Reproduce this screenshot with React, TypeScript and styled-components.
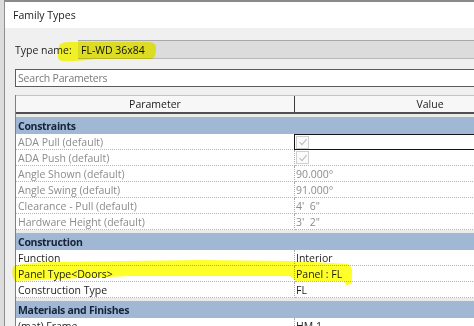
import React from "react";
import styled, { createGlobalStyle } from "styled-components";

const GlobalStyle = createGlobalStyle`
  html, body { margin: 0; padding: 0; }
  body {
    background: #dcdcdc;
    overflow: hidden;
    font-family: "Open Sans", "Noto Sans", "Liberation Sans", sans-serif;
    font-size: 10.5px;
    color: #1e1e1e;
  }
`;

const Screen = styled.div`
  position: relative;
  width: 474px;
  height: 326px;
  overflow: hidden;
  display: flex;
  align-items: flex-start;
  padding-left: 4px;
  box-sizing: border-box;
`;

const Dialog = styled.div`
  flex: none;
  width: 640px;
  background: #f0f0f0;
  border-left: 1px solid #8e8e8e;
  border-top: 2px solid #8a8a8a;
  display: flex;
  flex-direction: column;
  & > * { flex-shrink: 0; }
`;

const TitleBar = styled.div`
  height: 26px;
  background: #ffffff;
  display: flex;
  align-items: center;
  padding-left: 8px;
  font-size: 10.5px;
  color: #1a1a1a;
`;

const Content = styled.div`
  padding-left: 10px;
  display: flex;
  flex-direction: column;
  & > * { flex-shrink: 0; }
`;

const TypeRow = styled.div`
  margin-top: 12px;
  display: flex;
  align-items: stretch;
  height: 19px;
`;

const TypeLabel = styled.div`
  width: 63px;
  flex: none;
  display: flex;
  align-items: center;
`;

const TypeBox = styled.div`
  flex: 1;
  background: #dcdcdc;
  border-top: 1px solid #a8a8a8;
  border-bottom: 1px solid #b8b8b8;
  display: flex;
  align-items: center;
  padding-left: 3px;
  color: #111;
`;

const SearchBox = styled.div`
  margin-top: 10px;
  height: 16px;
  background: #ffffff;
  border: 1px solid #5c5c5c;
  border-right: none;
  display: flex;
  align-items: center;
  padding-left: 2px;
  color: #7a7a7a;
  letter-spacing: -0.2px;
`;

const Table = styled.div`
  margin-top: 8px;
  display: flex;
  flex-direction: column;
  border-left: 1px solid #808080;
  & > * { flex-shrink: 0; }
`;

const HeaderRow = styled.div`
  display: grid;
  grid-template-columns: 279px 1fr;
  height: 16px;
  background: #f7f7f7;
  border-top: 1px solid #c4c4c4;
  border-bottom: 2px solid #4f4f4f;
`;

const HeaderCell = styled.div<{ $divider?: boolean }>`
  display: flex;
  align-items: center;
  justify-content: center;
  color: #1a1a1a;
  border-right: ${(p) => (p.$divider ? "1px solid #3c3c3c" : "none")};
  padding-right: ${(p) => (p.$divider ? "0" : "80px")};
`;

const GroupRow = styled.div`
  height: 17px;
  border-top: 3px solid #ebebeb;
  background: #a0b8d4;
  display: flex;
  align-items: center;
  padding-left: 2px;
  font-weight: 700;
  letter-spacing: -0.3px;
  color: #16233b;
`;

const Row = styled.div`
  display: grid;
  grid-template-columns: 279px 1fr;
  height: 16px;
  background: #ffffff;
`;

const ParamCell = styled.div<{ $muted?: boolean }>`
  display: flex;
  align-items: center;
  padding-left: 2px;
  border-bottom: 1px dotted #b4b4b4;
  border-right: 1px dotted #a8a8a8;
  color: ${(p) => (p.$muted ? "#8c8c8c" : "#1e1e1e")};
  white-space: nowrap;
`;

const ValueCell = styled.div<{ $muted?: boolean; $selected?: boolean }>`
  display: flex;
  align-items: center;
  padding-left: 1px;
  box-sizing: border-box;
  border-bottom: 1px dotted #b4b4b4;
  ${(p) => (p.$selected ? "border: 1px solid #141414; margin-left: -1px; padding-left: 1px;" : "")}
  color: ${(p) => (p.$muted ? "#8c8c8c" : "#1e1e1e")};
  white-space: pre;
`;

const CheckBox = styled.span`
  width: 11px;
  height: 11px;
  border: 1px solid #cfcfcf;
  display: inline-flex;
  align-items: center;
  justify-content: center;
  background: #fbfbfb;
`;

const Overlay = styled.svg`
  position: absolute;
  left: 0;
  top: 0;
  pointer-events: none;
  mix-blend-mode: multiply;
`;

const Check = () => (
  <CheckBox>
    <svg width="10" height="10" viewBox="0 0 10 10">
      <path d="M1.5 5.2 L4 7.6 L8.6 2.2" fill="none" stroke="#bdbdbd" strokeWidth="1.1" />
    </svg>
  </CheckBox>
);

type R = { p: string; v?: React.ReactNode; muted?: boolean; selected?: boolean };

const Group = ({ title, rows }: { title: string; rows: R[] }) => (
  <>
    <GroupRow>{title}</GroupRow>
    {rows.map((r) => (
      <Row key={r.p}>
        <ParamCell $muted={r.muted}>{r.p}</ParamCell>
        <ValueCell $muted={r.muted} $selected={r.selected}>
          {r.v}
        </ValueCell>
      </Row>
    ))}
  </>
);

export default function App() {
  return (
    <>
      <GlobalStyle />
      <Screen>
        <Dialog>
          <TitleBar>Family Types</TitleBar>
          <Content>
            <TypeRow>
              <TypeLabel>Type name:</TypeLabel>
              <TypeBox>FL-WD 36x84</TypeBox>
            </TypeRow>
            <SearchBox>Search Parameters</SearchBox>
            <Table>
              <HeaderRow>
                <HeaderCell $divider>Parameter</HeaderCell>
                <HeaderCell>Value</HeaderCell>
              </HeaderRow>
              <Group
                title="Constraints"
                rows={[
                  { p: "ADA Pull (default)", v: <Check />, muted: true, selected: true },
                  { p: "ADA Push (default)", v: <Check />, muted: true },
                  { p: "Angle Shown (default)", v: "90.000°", muted: true },
                  { p: "Angle Swing (default)", v: "91.000°", muted: true },
                  { p: "Clearance - Pull (default)", v: "4'  6\"", muted: true },
                  { p: "Hardware Height (default)", v: "3'  2\"", muted: true },
                ]}
              />
              <Group
                title="Construction"
                rows={[
                  { p: "Function", v: "Interior" },
                  { p: "Panel Type<Doors>", v: "Panel : FL" },
                  { p: "Construction Type", v: "FL" },
                ]}
              />
              <Group title="Materials and Finishes" rows={[{ p: "(mat) Frame", v: "HM 1" }]} />
            </Table>
          </Content>
        </Dialog>
        <Overlay width="474" height="326" viewBox="0 0 474 326">
          <path
            d="M59 46 Q60 42 70 42 L150 42 Q157 43 156 50 Q156 59 150 59 L96 59 Q70 62 62 61 Q57 60 58 54 Z"
            fill="#ffff2a"
          />
          <path
            d="M13 267 Q18 263 50 262 L200 260 L294 261 L348 264 Q353 267 352 276 L352 284 L346 285 L344 281 L296 281 L290 276 L130 276 Q60 279 15 281 Q11 276 13 267 Z"
            fill="#ffff2a"
          />
        </Overlay>
      </Screen>
    </>
  );
}
